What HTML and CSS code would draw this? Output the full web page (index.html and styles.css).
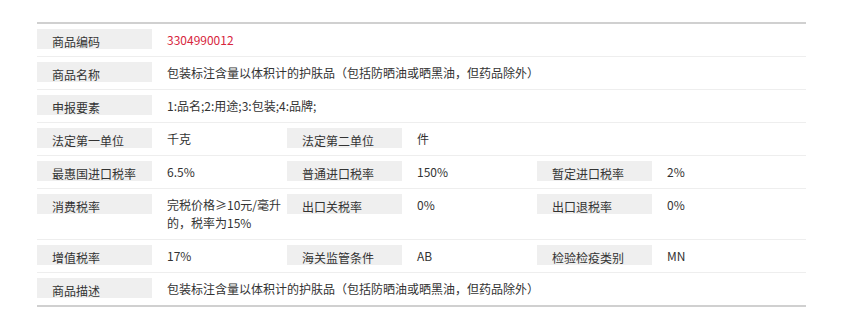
FILE: index.html
```html
<!DOCTYPE html>
<html lang="zh-CN">
<head>
    <meta charset="UTF-8">
    <title>商品详情</title>
    <link rel="stylesheet" href="styles.css">
</head>
<body>
    <div class="detail-table">
        <div class="row">
            <div class="label">商品编码</div>
            <div class="value wide code">3304990012</div>
        </div>
        <div class="row">
            <div class="label">商品名称</div>
            <div class="value wide">包装标注含量以体积计的护肤品（包括防晒油或晒黑油，但药品除外）</div>
        </div>
        <div class="row">
            <div class="label">申报要素</div>
            <div class="value wide">1:品名;2:用途;3:包装;4:品牌;</div>
        </div>
        <div class="row">
            <div class="label">法定第一单位</div>
            <div class="value">千克</div>
            <div class="label">法定第二单位</div>
            <div class="value">件</div>
        </div>
        <div class="row">
            <div class="label">最惠国进口税率</div>
            <div class="value">6.5%</div>
            <div class="label">普通进口税率</div>
            <div class="value">150%</div>
            <div class="label">暂定进口税率</div>
            <div class="value">2%</div>
        </div>
        <div class="row">
            <div class="label">消费税率</div>
            <div class="value">完税价格≥10元/毫升的，税率为15%</div>
            <div class="label">出口关税率</div>
            <div class="value">0%</div>
            <div class="label">出口退税率</div>
            <div class="value">0%</div>
        </div>
        <div class="row">
            <div class="label">增值税率</div>
            <div class="value">17%</div>
            <div class="label">海关监管条件</div>
            <div class="value">AB</div>
            <div class="label">检验检疫类别</div>
            <div class="value">MN</div>
        </div>
        <div class="row">
            <div class="label">商品描述</div>
            <div class="value wide">包装标注含量以体积计的护肤品（包括防晒油或晒黑油，但药品除外）</div>
        </div>
    </div>
</body>
</html>
```

FILE: styles.css
```css
body {
    margin: 0;
    padding: 22px 0 0 37px;
    background-color: white;
    font-family: SimSun, "Noto Sans CJK SC", sans-serif;
    font-size: 12px;
    color: #333;
}
.detail-table {
    width: 769px;
    border-top: 2px solid #d0d0d0;
    border-bottom: 2px solid #d0d0d0;
}
.row {
    display: grid;
    grid-template-columns: 115px 135px 115px 135px 115px 1fr;
    align-items: start;
    padding: 5px 0 7px;
    border-bottom: 1px solid #eeeeee;
}
.row:last-child {
    border-bottom: none;
}
.label {
    box-sizing: border-box;
    height: 20px;
    padding: 6px 0 0 15px;
    line-height: 14px;
    background-color: #efefef;
    white-space: nowrap;
    overflow: hidden;
}
.value {
    padding: 2px 0 0 15px;
    line-height: 18px;
}
.value.wide {
    grid-column: 2 / -1;
}
.code {
    color: #d7263d;
}
```
